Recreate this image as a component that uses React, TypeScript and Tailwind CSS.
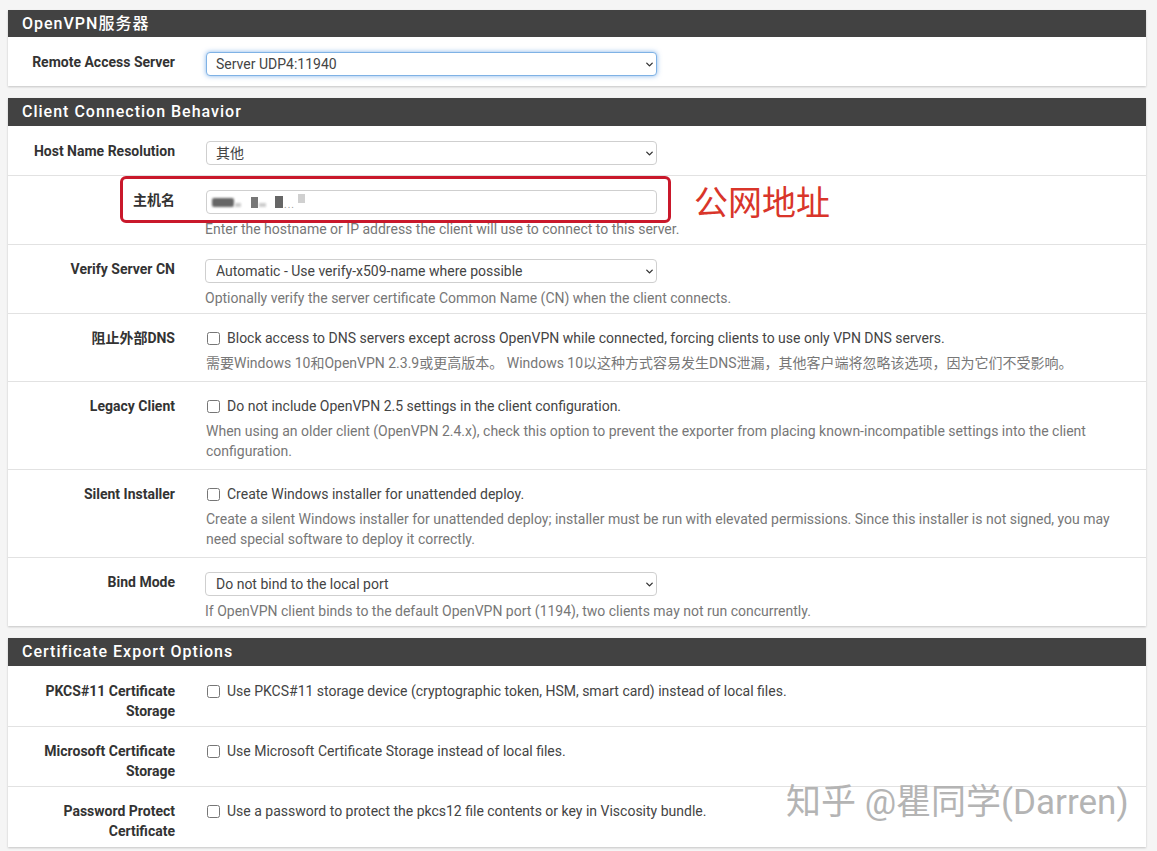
import { ChevronDown } from "lucide-react";
import type { ReactNode } from "react";

const FONT = "font-['Roboto','Noto_Sans_CJK_SC',sans-serif]";

function Panel({ title, short, children }: { title: string; short?: boolean; children: ReactNode }) {
  return (
    <section className="ml-2 mr-[11px] bg-white shadow-[0_1px_2px_rgba(0,0,0,0.2)]">
      <h2 className={"flex items-center bg-[#424242] pl-[14px] text-[16px] font-medium tracking-[1px] text-white " + (short ? "h-[27px]" : "h-[28px]")}>{title}</h2>
      <div className="divide-y divide-[#e2e2e2]">{children}</div>
    </section>
  );
}

function Row({ label, h, top, children }: { label: ReactNode; h: string; top?: boolean; children: ReactNode }) {
  return (
    <div className={"flex " + h + (top ? " pt-[1px]" : "")}>
      <div className="w-[167px] shrink-0 pt-[14px] text-right text-[14px] leading-[20px] font-bold text-[#333]">{label}</div>
      <div className="min-w-0 flex-1 pl-[30px] pr-[30px] pt-[14px]">{children}</div>
    </div>
  );
}

function Select({ value, focus, inset }: { value: string; focus?: boolean; inset?: boolean }) {
  return (
    <div
      className={
        "relative flex h-[24px] items-center rounded-[4px] border bg-white text-[14px] text-[#444] " +
        (inset ? "ml-[1px] w-[451px] pl-[9px] " : "w-[452px] pl-[10px] ") +
        (focus ? "border-[#7fb2e5] shadow-[0_0_5px_rgba(82,150,225,0.7)]" : "border-[#cfcfcf]")
      }
    >
      <select defaultValue={value} className="w-full appearance-none bg-transparent outline-none">
        <option>{value}</option>
      </select>
      <ChevronDown className="absolute right-[1px] top-[6px] h-[11px] w-[11px] text-[#333]" strokeWidth={3} />
    </div>
  );
}

function Help({ indent, children }: { indent?: boolean; children: ReactNode }) {
  return <p className={"mt-[5px] text-[14px] leading-[20px] text-[#777]" + (indent ? " pl-[1px]" : "")}>{children}</p>;
}

function Check({ text }: { text: string }) {
  return (
    <label className="flex h-[20px] items-center text-[14px] text-[#444]">
      <span className="ml-[2px] mr-[7px] h-[13px] w-[13px] shrink-0 rounded-[2.5px] border border-[#767676] bg-white" />
      {text}
    </label>
  );
}

export default function App() {
  return (
    <div className={"relative h-[851px] w-[1157px] overflow-hidden bg-[#f5f5f5] pt-[10px] " + FONT}>
      <Panel title="OpenVPN服务器" short>
        <Row label="Remote Access Server" h="h-[49px]" top>
          <Select value="Server UDP4:11940" focus inset />
        </Row>
      </Panel>

      <div className="h-[12px]" />

      <Panel title="Client Connection Behavior">
        <Row label="Host Name Resolution" h="h-[50px]" top>
          <Select value="其他" inset />
        </Row>
        <Row label="主机名" h="h-[69px]">
          <div className="ml-[1px] flex h-[24px] w-[451px] items-center gap-[1px] rounded-[4px] border border-[#cfcfcf] bg-white pl-[5px]">
            <span className="h-[9px] w-[22px] rounded-[2px] bg-[#666] blur-[1px]" />
            <span className="mt-[5px] h-[4px] w-[6px] bg-[#ccc] blur-[1px]" />
            <span className="ml-[9px] h-[11px] w-[7px] bg-[#777] blur-[0.5px]" />
            <span className="mt-[6px] h-[4px] w-[7px] bg-[#ccc] blur-[1px]" />
            <span className="ml-[8px] h-[12px] w-[8px] bg-[#666] blur-[0.5px]" />
            <span className="mt-[6px] w-[8px] text-[10px] leading-[10px] tracking-[1px] text-[#999]">...</span>
            <span className="ml-[5px] -mt-[8px] h-[9px] w-[7px] bg-[#d0d0d0] blur-[0.5px]" />
          </div>
          <Help>Enter the hostname or IP address the client will use to connect to this server.</Help>
        </Row>
        <Row label="Verify Server CN" h="h-[69px]">
          <Select value="Automatic - Use verify-x509-name where possible" />
          <Help>Optionally verify the server certificate Common Name (CN) when the client connects.</Help>
        </Row>
        <Row label="阻止外部DNS" h="h-[68px]">
          <Check text="Block access to DNS servers except across OpenVPN while connected, forcing clients to use only VPN DNS servers." />
          <Help indent>需要Windows 10和OpenVPN 2.3.9或更高版本。 Windows 10以这种方式容易发生DNS泄漏，其他客户端将忽略该选项，因为它们不受影响。</Help>
        </Row>
        <Row label="Legacy Client" h="h-[88px]">
          <Check text="Do not include OpenVPN 2.5 settings in the client configuration." />
          <Help indent>When using an older client (OpenVPN 2.4.x), check this option to prevent the exporter from placing known-incompatible settings into the client configuration.</Help>
        </Row>
        <Row label="Silent Installer" h="h-[88px]">
          <Check text="Create Windows installer for unattended deploy." />
          <Help indent>Create a silent Windows installer for unattended deploy; installer must be run with elevated permissions. Since this installer is not signed, you may need special software to deploy it correctly.</Help>
        </Row>
        <Row label="Bind Mode" h="h-[68px]">
          <Select value="Do not bind to the local port" />
          <Help>If OpenVPN client binds to the default OpenVPN port (1194), two clients may not run concurrently.</Help>
        </Row>
      </Panel>

      <div className="h-[12px]" />

      <Panel title="Certificate Export Options">
        <Row label={<>PKCS#11 Certificate<br />Storage</>} h="h-[61px]" top>
          <Check text="Use PKCS#11 storage device (cryptographic token, HSM, smart card) instead of local files." />
        </Row>
        <Row label={<>Microsoft Certificate<br />Storage</>} h="h-[60px]">
          <Check text="Use Microsoft Certificate Storage instead of local files." />
        </Row>
        <Row label={<>Password Protect<br />Certificate</>} h="h-[60px]">
          <Check text="Use a password to protect the pkcs12 file contents or key in Viscosity bundle." />
        </Row>
      </Panel>

      {/* annotation drawn over the screenshot */}
      <div className="absolute left-[120px] top-[176px] h-[47px] w-[551px] rounded-[6px] border-[3px] border-[#c9182b]" />
      <div className="absolute left-[694px] top-[181px] text-[34px] leading-[44px] text-[#d9352a]">公网地址</div>
      <div className="absolute left-[786px] top-[781px] text-[35px] leading-[44px] whitespace-nowrap text-[#b4b4b4]">知乎 @瞿同学(Darren)</div>
    </div>
  );
}
